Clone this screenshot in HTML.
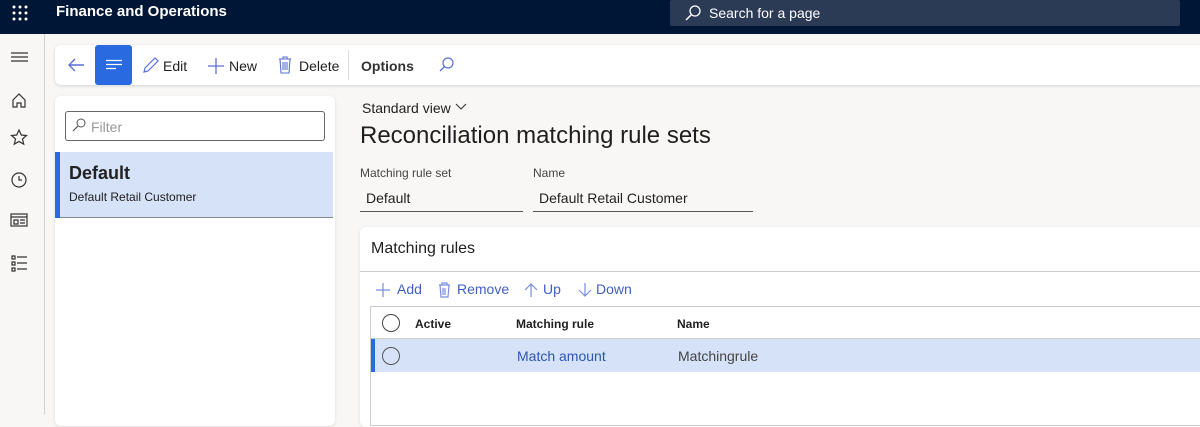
<!DOCTYPE html><html><head><style>
*{box-sizing:border-box;margin:0;padding:0}
body{width:1200px;height:414px;overflow:hidden;background:#f8f7f6;font-family:"Liberation Sans",sans-serif;color:#1f1f1f;position:relative}
.a{position:absolute}
.hdr{left:0;top:0;width:1200px;height:34px;background:#001636}
.nav{left:0;top:34px;width:45px;height:380px;background:#f8f7f6;border-right:1px solid #d0d0d0}
.tb{left:55px;top:45px;width:1150px;height:40px;background:#fff;border-radius:6px;box-shadow:0 1px 3px rgba(0,0,0,.15)}
.t{font-size:14px;white-space:nowrap}
.b{color:#3f5fc4}
</style></head><body>
<div class="a hdr"></div>
<svg class="a" style="left:12px;top:5px" width="18" height="18"><g fill="#fff"><circle cx="2" cy="2" r="1.5"/><circle cx="8" cy="2" r="1.5"/><circle cx="14" cy="2" r="1.5"/><circle cx="2" cy="8" r="1.5"/><circle cx="8" cy="8" r="1.5"/><circle cx="14" cy="8" r="1.5"/><circle cx="2" cy="14" r="1.5"/><circle cx="8" cy="14" r="1.5"/><circle cx="14" cy="14" r="1.5"/></g></svg>
<div class="a t" style="left:56px;top:3px;color:#fff;font-weight:bold;font-size:15px">Finance and Operations</div>
<div class="a" style="left:670px;top:0;width:510px;height:26px;background:#2b3a55;border-radius:2px"></div>
<svg class="a" style="left:684px;top:4px" width="18" height="18"><circle cx="11" cy="7" r="5" fill="none" stroke="#fff" stroke-width="1.3"/><path d="M7 11L2 16" stroke="#fff" stroke-width="1.5"/></svg>
<div class="a t" style="left:709px;top:5px;color:#fff">Search for a page</div>
<div class="a nav"></div>
<svg class="a" style="left:10px;top:48px" width="20" height="240" fill="none" stroke="#333" stroke-width="1.2">
<path d="M1 5h17M1 9h17M1 13h17" stroke="#333"/>
<path d="M3 52l6-6 6 6v7h-4v-4h-4v4h-4z"/>
<path d="M9 82l2.3 5 5.2.5-4 3.5 1.2 5.2L9 93.5 4.3 96.2 5.5 91l-4-3.5 5.2-.5z"/>
<circle cx="9" cy="132" r="7"/><path d="M9 128v4h3"/>
<rect x="1" y="166" width="16" height="12"/><path d="M1 169h16M4 172h4v4H4zM10 172h5M10 175h5"/>
<path d="M2 208h3v3H2zM2 214h3v3H2zM2 220h3v3H2zM7 209h10M7 215h10M7 221h10"/>
</svg>
<div class="a tb"></div>
<svg class="a" style="left:66px;top:56px" width="20" height="18"><path d="M18 9H3M9 3L3 9l6 6" fill="none" stroke="#5a6fd6" stroke-width="1.4"/></svg>
<div class="a" style="left:95px;top:45px;width:37px;height:40px;background:#2a6ae0;border-radius:3px"></div>
<svg class="a" style="left:105px;top:59px" width="18" height="12"><path d="M1 1.5h16M1 5.5h16M1 9.5h10" stroke="#fff" stroke-width="1.2"/></svg>
<svg class="a" style="left:142px;top:56px" width="18" height="18"><path d="M2 16l1-4 10-10 3 3-10 10z" fill="none" stroke="#5a6fd6" stroke-width="1.2"/></svg>
<div class="a t" style="left:163px;top:58px">Edit</div>
<svg class="a" style="left:207px;top:57px" width="18" height="18"><path d="M9 1v16M1 9h16" stroke="#5a6fd6" stroke-width="1.3"/></svg>
<div class="a t" style="left:229px;top:58px">New</div>
<svg class="a" style="left:278px;top:56px" width="14" height="18"><path d="M1 3h12M5 3V1h4v2M2 3l1 14h8l1-14M5 6v8M7 6v8M9 6v8" fill="none" stroke="#5a6fd6" stroke-width="1.1"/></svg>
<div class="a t" style="left:299px;top:58px">Delete</div>
<div class="a" style="left:348px;top:50px;width:1px;height:30px;background:#ddd"></div>
<div class="a t" style="left:361px;top:58px;font-weight:bold;color:#333">Options</div>
<svg class="a" style="left:438px;top:56px" width="18" height="18"><circle cx="10" cy="7" r="5" fill="none" stroke="#5a6fd6" stroke-width="1.2"/><path d="M6 11L2 15" stroke="#5a6fd6" stroke-width="1.3"/></svg>
<div class="a" style="left:55px;top:96px;width:280px;height:330px;background:#fff;border-radius:6px;box-shadow:0 1px 3px rgba(0,0,0,.12)"></div>
<div class="a" style="left:65px;top:111px;width:260px;height:30px;border:1px solid #666;border-radius:3px"></div>
<svg class="a" style="left:72px;top:118px" width="14" height="14"><circle cx="9" cy="5" r="4" fill="none" stroke="#555"/><path d="M6 8L1 13" stroke="#555" stroke-width="1.2"/></svg>
<div class="a t" style="left:91px;top:119px;color:#999">Filter</div>
<div class="a" style="left:55px;top:152px;width:278px;height:66px;background:#d6e2f8;border-bottom:1px solid #888"></div>
<div class="a" style="left:55px;top:152px;width:5px;height:66px;background:#2a6ae0"></div>
<div class="a t" style="left:69px;top:163px;font-size:18px;font-weight:bold;color:#222">Default</div>
<div class="a t" style="left:69px;top:190px;font-size:12px">Default Retail Customer</div>
<div class="a t" style="left:362px;top:100px">Standard view</div>
<svg class="a" style="left:455px;top:103px" width="12" height="8"><path d="M1 1l5 5 5-5" fill="none" stroke="#333" stroke-width="1.1"/></svg>
<div class="a t" style="left:360px;top:122px;font-size:24px">Reconciliation matching rule sets</div>
<div class="a t" style="left:360px;top:166px;font-size:12px;color:#444">Matching rule set</div>
<div class="a t" style="left:533px;top:166px;font-size:12px;color:#444">Name</div>
<div class="a t" style="left:366px;top:190px">Default</div>
<div class="a t" style="left:539px;top:190px">Default Retail Customer</div>
<div class="a" style="left:360px;top:211px;width:163px;height:1px;background:#555"></div>
<div class="a" style="left:533px;top:211px;width:220px;height:1px;background:#555"></div>
<div class="a" style="left:360px;top:227px;width:850px;height:200px;background:#fff;border-radius:6px;box-shadow:0 1px 3px rgba(0,0,0,.12)"></div>
<div class="a t" style="left:371px;top:240px;font-size:16px">Matching rules</div>
<div class="a" style="left:360px;top:271px;width:840px;height:1px;background:#ccc"></div>
<svg class="a" style="left:376px;top:282px" width="220" height="16" fill="none" stroke="#7a8de0" stroke-width="1.2">
<path d="M7 1v14M0 8h14"/>
<path d="M63 3h11M66 3V1h5v2M64 3l1 12h7l1-12M67 6v7M69 6v7"/>
<path d="M155 15V2M149 8l6-6 6 6"/>
<path d="M209 1v13M203 8l6 6 6-6"/>
</svg>
<div class="a t b" style="left:397px;top:281px">Add</div>
<div class="a t b" style="left:457px;top:281px">Remove</div>
<div class="a t b" style="left:543px;top:281px">Up</div>
<div class="a t b" style="left:596px;top:281px">Down</div>
<div class="a" style="left:370px;top:306px;width:840px;height:120px;border:1px solid #ccc;border-right:none"></div>
<div class="a" style="left:371px;top:338px;width:830px;height:1px;background:#ccc"></div>
<div class="a" style="left:371px;top:339px;width:830px;height:33px;background:#d6e2f8"></div>
<div class="a" style="left:371px;top:339px;width:4px;height:33px;background:#2a6ae0"></div>
<div class="a" style="left:382px;top:314px;width:18px;height:18px;border:1px solid #444;border-radius:50%"></div>
<div class="a" style="left:382px;top:347px;width:18px;height:18px;border:1px solid #555;border-radius:50%"></div>
<div class="a t" style="left:415px;top:317px;font-size:12px;font-weight:bold">Active</div>
<div class="a t" style="left:516px;top:317px;font-size:12px;font-weight:bold">Matching rule</div>
<div class="a t" style="left:677px;top:317px;font-size:12px;font-weight:bold">Name</div>
<div class="a t" style="left:517px;top:348px;color:#2d55b5">Match amount</div>
<div class="a t" style="left:678px;top:348px;color:#444">Matchingrule</div>
</body></html>
